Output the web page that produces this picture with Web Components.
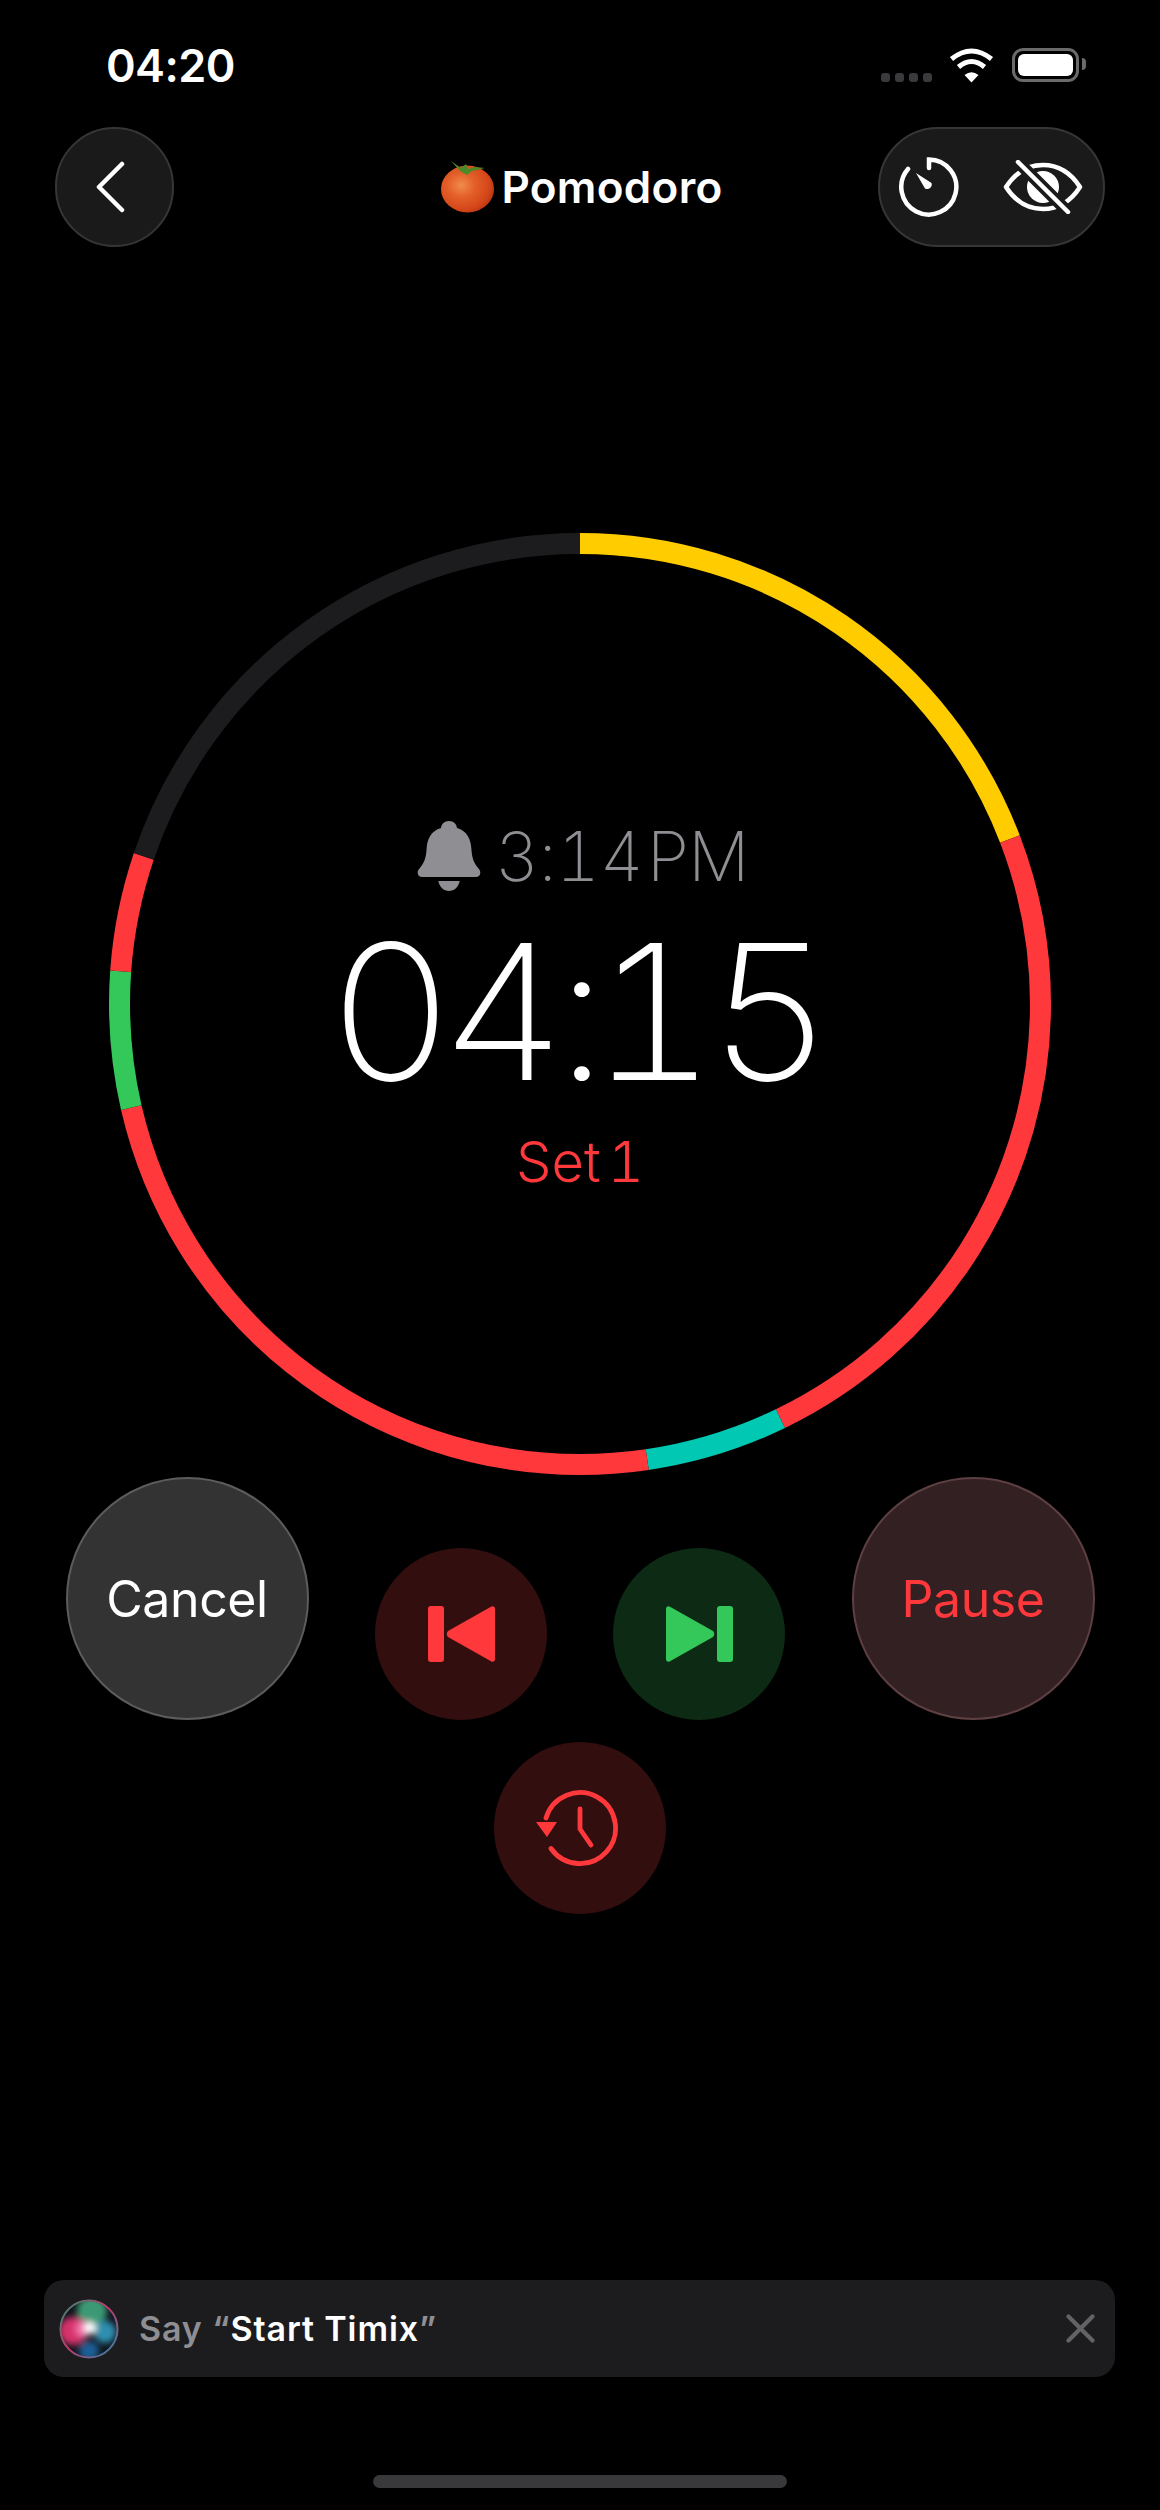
<!DOCTYPE html>
<html>
<head>
<meta charset="utf-8">
<title>Pomodoro</title>
<style>
  html, body { margin: 0; background: #000; }
  body {
    width: 1160px;
    height: 2510px;
    display: flex;
    flex-direction: column;
    overflow: hidden;
    color: #fff;
    font-family: Inter, "Liberation Sans", sans-serif;
  }
  svg { display: block; }
</style>
</head>
<body>
  <pm-status time="04:20"></pm-status>
  <pm-nav title="Pomodoro"></pm-nav>
  <pm-ring>
    <pm-clock alarm="3:14 PM" time="04:15" label="Set 1"></pm-clock>
  </pm-ring>
  <pm-controls></pm-controls>
  <pm-siri></pm-siri>
  <pm-home></pm-home>

<script>
customElements.define('pm-status',
class extends HTMLElement {
  constructor() {
    super();
    this.attachShadow({ mode: 'open' });
    this.shadowRoot.innerHTML = `
      <style>
        :host {
          display: flex;
          align-items: flex-start;
          height: 127px;
          padding: 48px 81px 0 106px;
          box-sizing: border-box;
        }
        #time {
          font: 600 45px/35px Inter, sans-serif;
          letter-spacing: -0.6px;
          flex: 1;
        }
        #dots { display: flex; gap: 5px; margin: 25px 17px 0 0; }
        #dots i { width: 9px; height: 9px; border-radius: 3px; background: #3a3a3c; }
        #battery {
          margin-left: 18px;
          width: 67px;
          height: 34px;
          box-sizing: border-box;
          border: 3px solid #6b6b6d;
          border-radius: 11px;
          padding: 3px;
          position: relative;
        }
        #battery b { display: block; height: 100%; background: #fff; border-radius: 6px; }
        #battery u {
          position: absolute;
          right: -10px;
          top: 7px;
          width: 4px;
          height: 12px;
          background: #6b6b6d;
          border-radius: 0 4px 4px 0;
        }
      </style>
      <div id="time"></div>
      <div id="dots"><i></i><i></i><i></i><i></i></div>
      <svg width="45" height="35" viewBox="0 0 45 35" fill="none" stroke="#fff" stroke-width="5">
        <path d="M2.5 11Q22.5-5 42.5 11"/>
        <path d="M9.5 19Q22.5 8 35.5 19"/>
        <path d="M15.5 27Q22.5 21.5 29.5 27L22.5 34.5Z" fill="#fff" stroke="none"/>
      </svg>
      <div id="battery"><b></b><u></u></div>
    `;
  }
  connectedCallback() {
    this.shadowRoot.getElementById('time').textContent = this.getAttribute('time');
  }
});

customElements.define('pm-nav',
class extends HTMLElement {
  constructor() {
    super();
    this.attachShadow({ mode: 'open' });
    this.shadowRoot.innerHTML = `
      <style>
        :host {
          display: grid;
          grid-template-columns: 1fr auto 1fr;
          align-items: center;
          height: 120px;
          padding: 0 55px;
        }
        .glass {
          height: 120px;
          box-sizing: border-box;
          background: #1a1a1b;
          border: 2px solid #363637;
          border-radius: 60px;
          display: flex;
          align-items: center;
        }
        #back { width: 119px; justify-content: flex-start; padding-left: 38px; justify-self: start; }
        #tools { width: 227px; justify-self: end; padding-left: 18px; gap: 43px; }
        #title { display: flex; align-items: center; gap: 7px; margin-left: 4px; }
        #label { font: 600 44px/50px Inter, sans-serif; letter-spacing: 0.3px; }
      </style>
      <div id="back" class="glass">
        <svg width="30" height="52" viewBox="0 0 30 52" fill="none" stroke="#fff" stroke-width="4.5" stroke-linecap="round" stroke-linejoin="round">
          <path d="M27 3L4 26L27 49"/>
        </svg>
      </div>
      <div id="title">
        <svg width="53" height="52" viewBox="0 0 53 52">
          <defs>
            <radialGradient id="tom" cx="0.38" cy="0.42" r="0.7">
              <stop offset="0" stop-color="#f08c4c"/>
              <stop offset="0.35" stop-color="#e4612a"/>
              <stop offset="0.78" stop-color="#d34418"/>
              <stop offset="1" stop-color="#a8300d"/>
            </radialGradient>
          </defs>
          <ellipse cx="26.5" cy="28" rx="26.5" ry="23.5" fill="url(#tom)"/>
          <path d="M10 0L20 7L25 3L27 8L34 6L44 7L31 10L26 14L19 10Z" fill="#4a8a28"/>
        </svg>
        <div id="label"></div>
      </div>
      <div id="tools" class="glass">
        <svg width="62" height="62" viewBox="0 0 62 62" fill="none" stroke="#fff" stroke-width="4.5" stroke-linecap="round">
          <path d="M31 12V3.5A27.5 27.5 0 1 1 10 13"/>
          <path d="M18 17L27 32.5A4.6 4.6 0 0 0 33.5 27Z" fill="#fff" stroke="none"/>
        </svg>
        <svg width="80" height="54" viewBox="0 0 80 54" fill="none" stroke-linecap="round">
          <path d="M3 27C14 10 27 5 40 5C53 5 66 10 77 27C66 44 53 49 40 49C27 49 14 44 3 27Z" stroke="#fff" stroke-width="4.5" stroke-linejoin="round"/>
          <circle cx="40" cy="27" r="16" fill="#fff"/>
          <path d="M15 2L65 52" stroke="#1a1a1b" stroke-width="12"/>
          <path d="M15 2L65 52" stroke="#fff" stroke-width="4.5"/>
        </svg>
      </div>
    `;
  }
  connectedCallback() {
    this.shadowRoot.getElementById('label').textContent = this.getAttribute('title');
  }
});

customElements.define('pm-ring',
class extends HTMLElement {
  constructor() {
    super();
    this.attachShadow({ mode: 'open' });
    // [start, end, colour] in degrees, clockwise from the top
    const segments = [
      [0, 69, '#ffcc00'],
      [69, 154.2, '#ff383c'],
      [154.2, 171.6, '#00c8b3'],
      [171.6, 257, '#ff383c'],
      [257, 274.1, '#34c759'],
      [274.1, 288.7, '#ff383c'],
      [288.7, 360, '#1c1c1e']
    ];
    const arcs = segments.map(([a, b, c]) =>
      `<circle cx="471" cy="471" r="460.5" pathLength="360" stroke="${c}"
        stroke-dasharray="${b - a} ${360 - (b - a)}" stroke-dashoffset="${-a}"/>`
    ).join('');
    this.shadowRoot.innerHTML = `
      <style>
        :host {
          display: grid;
          width: 942px;
          height: 942px;
          margin: 286px 0 0 109px;
        }
        svg, #center { grid-area: 1 / 1; }
        #center { display: flex; align-items: center; justify-content: center; }
      </style>
      <svg width="942" height="942" viewBox="0 0 942 942" fill="none" stroke-width="21">
        <g transform="rotate(-90 471 471)">${arcs}</g>
      </svg>
      <div id="center"><slot></slot></div>
    `;
  }
});

customElements.define('pm-clock',
class extends HTMLElement {
  constructor() {
    super();
    this.attachShadow({ mode: 'open' });
    this.shadowRoot.innerHTML = `
      <style>
        :host {
          display: flex;
          flex-direction: column;
          align-items: center;
          font-family: Inter, sans-serif;
          font-variant-numeric: tabular-nums;
        }
        #alarm {
          display: flex;
          align-items: center;
          gap: 14px;
          height: 80px;
          margin-left: 6px;
          color: #8e8e93;
        }
        #alarm span { font-size: 68px; font-weight: 200; line-height: 80px; word-spacing: -14px; letter-spacing: -0.5px; }
        #time {
          font-size: 188px;
          font-weight: 200;
          line-height: 180px;
          margin-top: 26px;
          color: #fff;
          /* the reference digits are a bit wider than Inter's */
          transform: scaleX(1.05);
        }
        #set {
          font-size: 56px;
          font-weight: 300;
          line-height: 60px;
          margin-top: 30px;
          color: #ff383c;
          word-spacing: -8px;
        }
      </style>
      <div id="alarm">
        <svg width="64" height="70" viewBox="0 0 60 70" preserveAspectRatio="none" fill="#8e8e93">
          <path d="M30 0C25.5 0 23 3 22.5 7C13 10 9.5 18 9 28C8.5 38 6 43 2 48C-.5 51 .5 56 5 56H55C59.5 56 60.5 51 58 48C54 43 51.5 38 51 28C50.5 18 47 10 37.5 7C37 3 34.5 0 30 0Z"/>
          <path d="M20 60H40C39 66 35 70 30 70C25 70 21 66 20 60Z"/>
        </svg>
        <span id="at"></span>
      </div>
      <div id="time"></div>
      <div id="set"></div>
    `;
  }
  connectedCallback() {
    let root = this.shadowRoot;
    root.getElementById('at').textContent = this.getAttribute('alarm');
    root.getElementById('set').textContent = this.getAttribute('label');
    const kern = [-14.5, -11, -17, -11, 0];
    root.getElementById('time').innerHTML = this.getAttribute('time').split('')
      .map((c, i) => `<span style="letter-spacing:${kern[i]}px">${c}</span>`).join('');
  }
});

customElements.define('pm-round',
class extends HTMLElement {
  constructor() {
    super();
    this.attachShadow({ mode: 'open' });
    this.shadowRoot.innerHTML = `
      <style>
        :host {
          display: flex;
          align-items: center;
          justify-content: center;
          flex: none;
          box-sizing: border-box;
          width: var(--size, 172px);
          height: var(--size, 172px);
          border-radius: 50%;
          background: var(--bg);
          color: var(--fg);
          font: 400 50px/1 Inter, sans-serif;
          letter-spacing: -0.4px;
        }
      </style>
      <slot></slot>
    `;
  }
});

customElements.define('pm-controls',
class extends HTMLElement {
  constructor() {
    super();
    this.attachShadow({ mode: 'open' });
    this.shadowRoot.innerHTML = `
      <style>
        :host {
          display: flex;
          flex-direction: column;
          align-items: center;
          margin-top: 2px;
        }
        #row {
          display: flex;
          align-items: flex-end;
          width: 1029px;
          justify-content: space-between;
        }
        #history { margin-top: 22px; }
        .big { --size: 243px; }
        #cancel { --bg: #333334; --fg: #fff; border: 2px solid #5c5c5e; }
        #pause { --bg: #332022; --fg: #ff383c; border: 2px solid #5e3f42; }
        .red { --bg: #330e0f; --fg: #ff383c; }
        .green { --bg: #0c2a14; --fg: #34c759; }
        #pair { display: flex; gap: 66px; }
      </style>
      <div id="row">
        <pm-round id="cancel" class="big"><span>Cancel</span></pm-round>
        <div id="pair">
          <pm-round class="red">
            <svg width="67" height="56" viewBox="0 0 67 56" fill="#ff383c">
              <rect width="16" height="56" rx="3"/>
              <path d="M20 31Q17.500 28 20 25L63 .8C65 -.6 67 .6 67 3V53C67 55.400 65 56.600 63 55.200Z"/>
            </svg>
          </pm-round>
          <pm-round class="green">
            <svg width="67" height="56" viewBox="0 0 67 56" fill="#34c759">
              <rect x="51" width="16" height="56" rx="3"/>
              <path d="M47 31Q49.500 28 47 25L4 .8C2 -.6 0 .6 0 3V53C0 55.400 2 56.600 4 55.200Z"/>
            </svg>
          </pm-round>
        </div>
        <pm-round id="pause" class="big"><span>Pause</span></pm-round>
      </div>
      <pm-round id="history" class="red">
        <svg width="88" height="78" viewBox="0 0 88 78" fill="none" stroke="#ff383c" stroke-width="4.8" stroke-linecap="round" stroke-linejoin="round">
          <path d="M10 29A35.500 35.500 0 1 1 15 59.500"/>
          <path d="M44 20V40L55 56"/>
          <path d="M0 33H21L11 48Z" fill="#ff383c" stroke="none"/>
        </svg>
      </pm-round>
    `;
  }
});

customElements.define('pm-siri',
class extends HTMLElement {
  constructor() {
    super();
    this.attachShadow({ mode: 'open' });
    this.shadowRoot.innerHTML = `
      <style>
        :host {
          display: flex;
          align-items: center;
          height: 97px;
          margin: auto 45px 0 44px;
          padding: 0 20px 0 15px;
          background: #1c1c1e;
          border-radius: 20px;
          font: 600 34px/1 Inter, sans-serif;
          color: #8e8e93;
        }
        #orb { flex: none; }
        #text { flex: 1; margin-left: 20px; letter-spacing: 0.9px; }
        #text b { color: #fff; font-weight: 600; }
      </style>
      <svg id="orb" width="60" height="60" viewBox="0 0 60 60">
        <defs>
          <filter id="soft"><feGaussianBlur stdDeviation="3"/></filter>
          <clipPath id="disc"><circle cx="30" cy="30" r="28"/></clipPath>
          <linearGradient id="rim" x1="0" y1="0" x2="1" y2="1">
            <stop offset="0" stop-color="#2f8f76"/>
            <stop offset="0.5" stop-color="#c23a6c"/>
            <stop offset="1" stop-color="#1d8fb0"/>
          </linearGradient>
        </defs>
        <circle cx="30" cy="30" r="29" fill="#10151c"/>
        <g clip-path="url(#disc)" filter="url(#soft)">
          <circle cx="33" cy="12" r="15" fill="#3b9a74"/>
          <circle cx="14" cy="32" r="14" fill="#d5306a"/>
          <circle cx="46" cy="33" r="11" fill="#2f8fb0"/>
          <circle cx="30" cy="52" r="10" fill="#1f5f96"/>
          <circle cx="24" cy="30" r="8" fill="#f070a8"/>
          <circle cx="31" cy="29" r="6" fill="#fff"/>
        </g>
        <circle cx="30" cy="30" r="28.5" fill="none" stroke="url(#rim)" stroke-width="2"/>
      </svg>
      <div id="text">Say “<b>Start Timix</b>”</div>
      <svg width="29" height="29" viewBox="0 0 29 29" fill="none" stroke="#636366" stroke-width="4.2" stroke-linecap="round">
        <path d="M2.500 2.500L26.500 26.500M26.500 2.500L2.500 26.500"/>
      </svg>
    `;
  }
});

customElements.define('pm-home',
class extends HTMLElement {
  constructor() {
    super();
    this.attachShadow({ mode: 'open' });
    this.shadowRoot.innerHTML = `
      <style>
        :host {
          display: block;
          width: 414px;
          height: 13px;
          margin: 98px 0 22px 373px;
          border-radius: 7px;
          background: #39393b;
        }
      </style>
    `;
  }
});
</script>
</body>
</html>
